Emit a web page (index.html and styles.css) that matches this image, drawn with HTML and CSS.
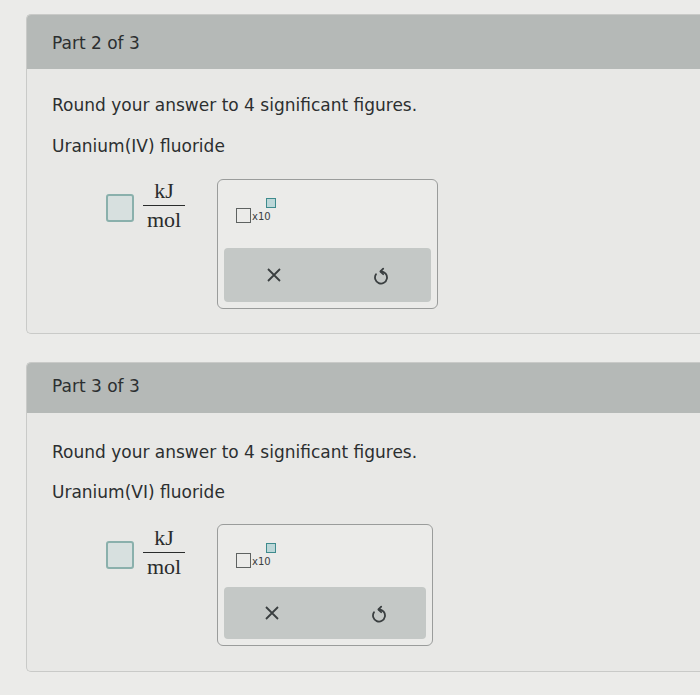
FILE: index.html
```html
<!DOCTYPE html>
<html>
<head>
<meta charset="utf-8">
<link rel="stylesheet" href="styles.css">
</head>
<body>
<div class="page">
  <section class="card card-one">
    <div class="card-head">Part 2 of 3</div>
    <div class="card-body">
      <p class="prompt">Round your answer to 4 significant figures.</p>
      <p class="compound">Uranium(IV) fluoride</p>
      <div class="answer-row">
        <div class="answer">
          <span class="ans-box"></span>
          <span class="frac"><span class="num">kJ</span><span class="den">mol</span></span>
        </div>
        <div class="widget">
          <div class="sci"><span class="sci-box"></span><span class="sci-x">x10</span><span class="sci-exp"></span></div>
          <div class="tools">
            <span class="tool"><svg width="18" height="18" viewBox="0 0 18 18"><path d="M3 3 L15 15 M15 3 L3 15" stroke="#3a3f40" stroke-width="1.8" fill="none"/></svg></span>
            <span class="tool"><svg width="18" height="20" viewBox="0 0 18 20"><path d="M9 6.5 A6 6 0 1 1 4 9.2" stroke="#3a3f40" stroke-width="1.8" fill="none" stroke-linecap="round"/><path d="M11.2 3.6 L8.4 6.5 L11.2 9.2" stroke="#3a3f40" stroke-width="1.8" fill="none" stroke-linecap="round" stroke-linejoin="round"/></svg></span>
          </div>
        </div>
      </div>
    </div>
  </section>

  <section class="card card-two">
    <div class="card-head">Part 3 of 3</div>
    <div class="card-body">
      <p class="prompt">Round your answer to 4 significant figures.</p>
      <p class="compound">Uranium(VI) fluoride</p>
      <div class="answer-row">
        <div class="answer">
          <span class="ans-box"></span>
          <span class="frac"><span class="num">kJ</span><span class="den">mol</span></span>
        </div>
        <div class="widget">
          <div class="sci"><span class="sci-box"></span><span class="sci-x">x10</span><span class="sci-exp"></span></div>
          <div class="tools">
            <span class="tool"><svg width="18" height="18" viewBox="0 0 18 18"><path d="M3 3 L15 15 M15 3 L3 15" stroke="#3a3f40" stroke-width="1.8" fill="none"/></svg></span>
            <span class="tool"><svg width="18" height="20" viewBox="0 0 18 20"><path d="M9 6.5 A6 6 0 1 1 4 9.2" stroke="#3a3f40" stroke-width="1.8" fill="none" stroke-linecap="round"/><path d="M11.2 3.6 L8.4 6.5 L11.2 9.2" stroke="#3a3f40" stroke-width="1.8" fill="none" stroke-linecap="round" stroke-linejoin="round"/></svg></span>
          </div>
        </div>
      </div>
    </div>
  </section>
</div>
</body>
</html>
```

FILE: styles.css
```css
html, body {
  margin: 0;
  padding: 0;
  background: #ebebe9;
  overflow: hidden;
  height: 695px;
  font-family: "DejaVu Sans", Verdana, sans-serif;
  color: #2c2f30;
}
.page {
  padding-top: 14px;
  padding-left: 26px;
}
.card {
  width: 700px;
  border: 1px solid #c9cac8;
  border-right: none;
  border-radius: 5px 0 0 5px;
  background: #e8e8e6;
  overflow: hidden;
}
.card-two {
  margin-top: 28px;
}
.card-head {
  background: #b5b9b7;
  height: 54px;
  line-height: 56px;
  padding-left: 25px;
  font-size: 17px;
}
.card-two .card-head {
  height: 50px;
  line-height: 46px;
}
.card-body {
  padding-left: 25px;
}
.card-one .card-body {
  padding-top: 24px;
  height: 240px;
}
.card-two .card-body {
  padding-top: 27px;
  height: 231px;
}
.prompt, .compound {
  margin: 0;
  font-size: 17px;
  line-height: 24px;
}
.compound {
  margin-top: 17px;
}
.card-two .compound {
  margin-top: 16px;
}
.answer-row {
  display: flex;
  align-items: flex-start;
  margin-top: 19px;
  padding-left: 54px;
}
.card-one .widget {
  margin-top: 2px;
}
.card-two .answer-row {
  margin-top: 20px;
}
.answer {
  display: flex;
  align-items: center;
  padding-top: 2px;
  width: 111px;
}
.ans-box {
  width: 24px;
  height: 24px;
  border: 2px solid #8ab0ac;
  border-radius: 3px;
  background: #d7e0df;
  margin-right: 9px;
  margin-top: 4px;
}
.frac {
  display: flex;
  flex-direction: column;
  align-items: center;
  font-family: "Liberation Serif", "Times New Roman", serif;
  font-size: 22px;
  color: #2a2c2c;
  width: 42px;
}
.num {
  border-bottom: 1.5px solid #2a2c2c;
  width: 100%;
  text-align: center;
  line-height: 24px;
  padding-bottom: 2px;
}
.den {
  line-height: 26px;
  padding-top: 1px;
}
.widget {
  width: 221px;
  height: 130px;
  border: 1.5px solid #9a9c9b;
  border-radius: 6px;
  background: #ebebe9;
  box-sizing: border-box;
  padding: 18px 6px 6px 6px;
  display: flex;
  flex-direction: column;
}
.card-two .widget {
  height: 122px;
  width: 216px;
}
.sci {
  display: flex;
  align-items: flex-end;
  height: 24px;
  padding-left: 12px;
}
.sci-box {
  width: 13px;
  height: 13px;
  border: 1.5px solid #5e6261;
  margin-bottom: -1px;
}
.sci-x {
  font-size: 10px;
  color: #3a3e3f;
  line-height: 10px;
  margin-left: 1px;
}
.sci-exp {
  width: 8px;
  height: 8px;
  border: 1.5px solid #3e8b8d;
  background: #bcd7d8;
  align-self: flex-start;
  margin-left: -5px;
}
.tools {
  margin-top: auto;
  height: 54px;
  background: #c4c8c6;
  border-radius: 4px;
  display: flex;
  align-items: center;
  justify-content: center;
  gap: 67px;
}
.card-two .tools {
  height: 52px;
}
.tool {
  display: flex;
  align-items: center;
  justify-content: center;
  width: 40px;
}
```
